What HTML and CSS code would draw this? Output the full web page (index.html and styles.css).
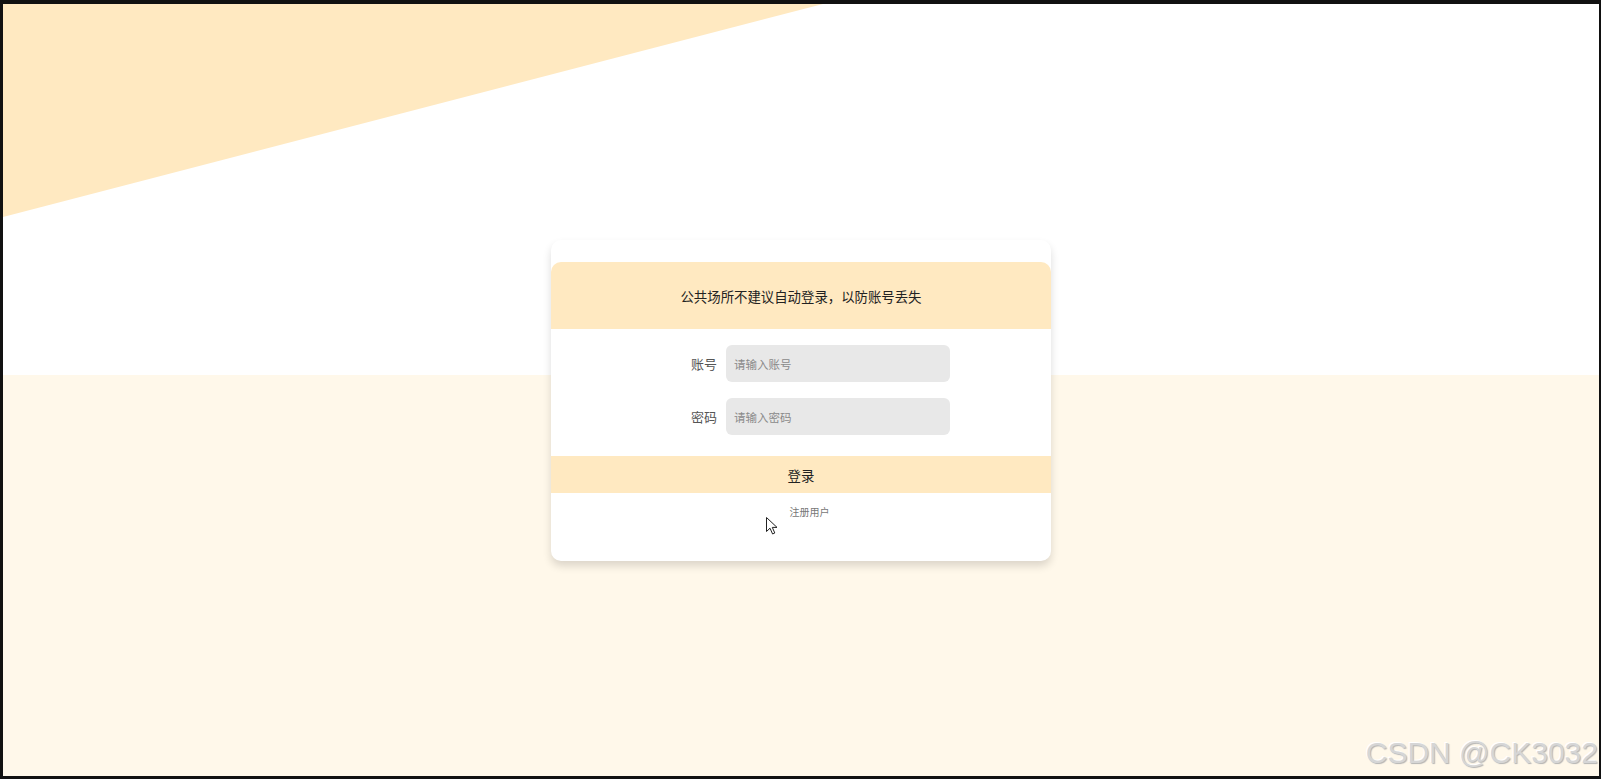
FILE: index.html
```html
<!DOCTYPE html>
<html lang="zh-CN">
<head>
<meta charset="utf-8">
<title>登录</title>
<link rel="stylesheet" href="styles.css">
</head>
<body>
<div class="frame">
  <div class="stage">
    <div class="card">
      <div class="notice">公共场所不建议自动登录，以防账号丢失</div>
      <div class="form">
        <div class="row">
          <span class="label">账号</span>
          <input class="field" type="text" placeholder="请输入账号">
        </div>
        <div class="row">
          <span class="label">密码</span>
          <input class="field" type="password" placeholder="请输入密码">
        </div>
      </div>
      <div class="login">登录</div>
      <div class="register">注册用户</div>
    </div>
  </div>
  <svg class="cursor" width="12" height="18" viewBox="0 0 12 18"><path d="M0.5 0.5 L0.5 14.5 L4 11.2 L6.6 17 L8.8 16 L6.3 10.4 L11 10.4 Z" fill="#fff" stroke="#222" stroke-width="1" stroke-linejoin="round"/></svg>
  <div class="watermark">CSDN @CK3032</div>
</div>
</body>
</html>
```
FILE: styles.css
```css
html, body {
  margin: 0;
  padding: 0;
}
body {
  width: 1601px;
  height: 779px;
  overflow: hidden;
  font-family: "Noto Sans CJK SC", "Noto Sans", sans-serif;
}
.frame {
  position: relative;
  box-sizing: border-box;
  width: 1601px;
  height: 779px;
  border-style: solid;
  border-color: #111;
  border-width: 4px 2px 3px 3px;
  overflow: hidden;
  background: linear-gradient(to bottom, #ffffff 0, #ffffff 371px, #fff8ea 371px, #fff8ea 100%);
}
.frame::before {
  content: "";
  position: absolute;
  left: 0;
  top: 0;
  width: 820px;
  height: 213px;
  background: #ffe9c1;
  clip-path: polygon(0 0, 100% 0, 0 100%);
}
.stage {
  position: relative;
  display: flex;
  justify-content: center;
  align-items: flex-start;
  padding-top: 236px;
}
.card {
  width: 500px;
  background: #ffffff;
  border-radius: 10px;
  box-shadow: 0 5px 8px rgba(0, 0, 0, 0.14);
  padding-top: 22px;
  padding-bottom: 42px;
}
.notice {
  height: 67px;
  display: flex;
  align-items: center;
  justify-content: center;
  background: #ffe9c1;
  border-radius: 10px 10px 0 0;
  font-size: 13.4px;
  color: #222;
}
.form {
  display: flex;
  flex-direction: column;
  gap: 16px;
  padding: 16px 0 0 140px;
}
.row {
  display: flex;
  align-items: center;
  height: 37px;
}
.label {
  width: 26px;
  margin-right: 9px;
  font-size: 13px;
  color: #555;
  white-space: nowrap;
}
.field {
  box-sizing: border-box;
  width: 224px;
  height: 37px;
  border: none;
  outline: none;
  border-radius: 6px;
  background: #e8e8e8;
  padding: 0 8px;
  font-family: inherit;
  font-size: 11.5px;
  color: #333;
}
.field::placeholder {
  color: #8a8a8a;
}
.login {
  margin-top: 21px;
  height: 37px;
  display: flex;
  align-items: center;
  justify-content: center;
  background: #ffe9c1;
  font-size: 13.4px;
  color: #222;
}
.register {
  margin-top: 12px;
  padding-left: 17px;
  text-align: center;
  font-size: 10px;
  line-height: 14px;
  color: #777;
}
.cursor {
  position: absolute;
  left: 763px;
  top: 513px;
}
.watermark {
  position: absolute;
  right: 1px;
  bottom: 8px;
  font-family: "Liberation Sans", Arial, sans-serif;
  font-size: 30px;
  line-height: 30px;
  color: #d6d6d6;
  text-shadow: 1px 1px 1px #b4b4b4, -1px -1px 0 #ffffff;
  white-space: nowrap;
}
```
